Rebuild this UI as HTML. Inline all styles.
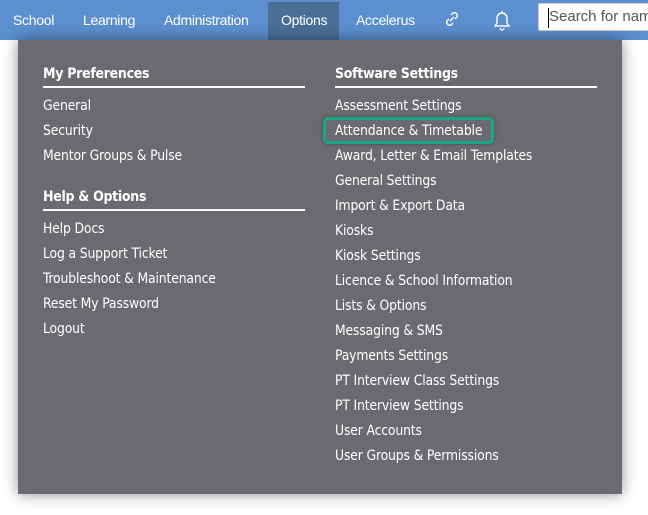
<!DOCTYPE html>
<html><head><style>
*{margin:0;padding:0;box-sizing:border-box}
body{width:648px;height:515px;background:#fff;font-family:"DejaVu Sans Condensed","Liberation Sans",sans-serif;position:relative;overflow:hidden}
.nav{position:absolute;left:0;top:0;width:648px;height:40px;background:#5c8fcf}
.nav span{position:absolute;top:12px;color:#fff;font-size:14px;font-family:"Liberation Sans",sans-serif;letter-spacing:-0.3px}
.opt{position:absolute;left:268px;top:2px;width:71px;height:38px;background:#4a6f97}
.search{position:absolute;left:538px;top:3px;width:120px;height:28px;background:#fff;border:1px solid #ccc;border-radius:2px;color:#555;font-size:15px;padding:4px 0 0 10px;font-family:"Liberation Sans",sans-serif}
.search:before{content:"";position:absolute;left:9px;top:4px;width:1px;height:20px;background:#000}
.dd{position:absolute;left:18px;top:40px;width:604px;height:454px;background:#696b6e;box-shadow:0 0 14px rgba(0,0,0,.45)}
.col{position:absolute;top:26px;width:270px}
.h{color:#fff;font-weight:bold;font-size:14px;height:22px;border-bottom:2px solid #fff;margin-bottom:6px;font-family:"DejaVu Sans Condensed",sans-serif;letter-spacing:-0.3px}
.i{color:#fff;font-size:13.8px;height:25px;line-height:25px;font-family:"DejaVu Sans Condensed",sans-serif;letter-spacing:-0.15px}
.h2{margin-top:20px;margin-bottom:6px}
.sel{position:absolute;left:305px;top:77px;width:171px;height:27px;border:3px solid #1aa687;border-radius:5px;box-shadow:0 0 4px rgba(0,0,0,.3)}
</style></head><body>
<div class="nav">
<div class="opt"></div>
<span style="left:13px">School</span>
<span style="left:83px">Learning</span>
<span style="left:164px">Administration</span>
<span style="left:281px">Options</span>
<span style="left:356px">Accelerus</span>
<svg style="position:absolute;left:442px;top:9px" width="20" height="20" viewBox="0 0 20 20" fill="none" stroke="#fff" stroke-width="1.4"><path d="M8 12l4-4M9 6l2-2a3 3 0 0 1 4 4l-2 2M11 14l-2 2a3 3 0 0 1-4-4l2-2"/></svg>
<svg style="position:absolute;left:491px;top:8px" width="22" height="24" viewBox="0 0 22 24" fill="none" stroke="#fff" stroke-width="1.4"><path d="M4 18h14l-2-3V10a5 5 0 0 0-10 0v5z M9 20a2 2 0 0 0 4 0 M11 3v2"/></svg>
<div class="search">Search for nam</div>
</div>
<div class="dd">
<div class="col" style="left:25px;width:262px">
<div class="h">My Preferences</div>
<div class="i">General</div><div class="i">Security</div><div class="i">Mentor Groups &amp; Pulse</div>
<div class="h h2">Help &amp; Options</div>
<div class="i">Help Docs</div><div class="i">Log a Support Ticket</div><div class="i">Troubleshoot &amp; Maintenance</div><div class="i">Reset My Password</div><div class="i">Logout</div>
</div>
<div class="col" style="left:317px;width:262px">
<div class="h">Software Settings</div>
<div class="i">Assessment Settings</div><div class="i">Attendance &amp; Timetable</div><div class="i">Award, Letter &amp; Email Templates</div><div class="i">General Settings</div><div class="i">Import &amp; Export Data</div><div class="i">Kiosks</div><div class="i">Kiosk Settings</div><div class="i">Licence &amp; School Information</div><div class="i">Lists &amp; Options</div><div class="i">Messaging &amp; SMS</div><div class="i">Payments Settings</div><div class="i">PT Interview Class Settings</div><div class="i">PT Interview Settings</div><div class="i">User Accounts</div><div class="i">User Groups &amp; Permissions</div>
</div>
<div class="sel"></div>
</div>
</body></html>
